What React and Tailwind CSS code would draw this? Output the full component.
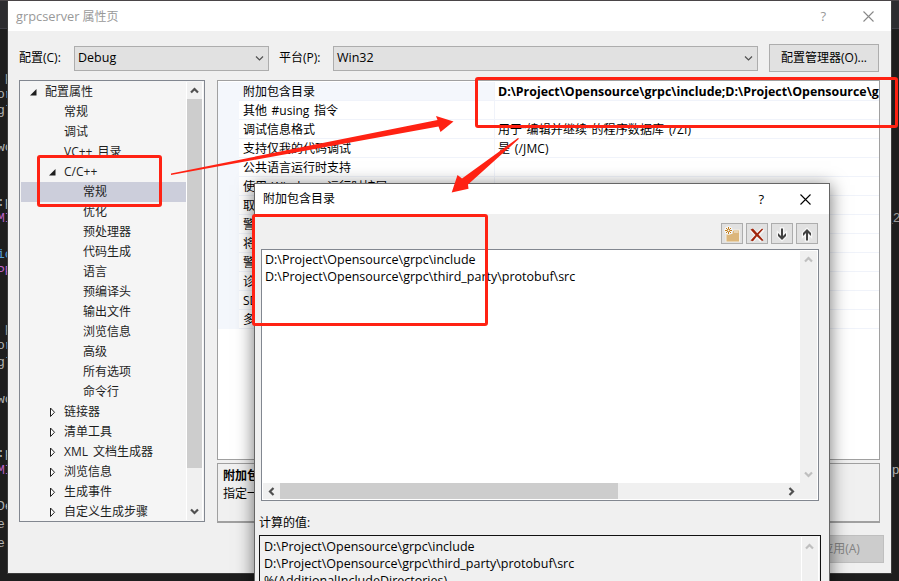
import React from 'react';

const treeItems = [
  { label: '配置属性', level: 0, arrow: 'open' },
  { label: '常规', level: 1 },
  { label: '调试', level: 1 },
  { label: 'VC++ 目录', level: 1 },
  { label: 'C/C++', level: 1, arrow: 'open' },
  { label: '常规', level: 2, selected: true },
  { label: '优化', level: 2 },
  { label: '预处理器', level: 2 },
  { label: '代码生成', level: 2 },
  { label: '语言', level: 2 },
  { label: '预编译头', level: 2 },
  { label: '输出文件', level: 2 },
  { label: '浏览信息', level: 2 },
  { label: '高级', level: 2 },
  { label: '所有选项', level: 2 },
  { label: '命令行', level: 2 },
  { label: '链接器', level: 1, arrow: 'closed' },
  { label: '清单工具', level: 1, arrow: 'closed' },
  { label: 'XML 文档生成器', level: 1, arrow: 'closed' },
  { label: '浏览信息', level: 1, arrow: 'closed' },
  { label: '生成事件', level: 1, arrow: 'closed' },
  { label: '自定义生成步骤', level: 1, arrow: 'closed' },
];

const properties = [
  { name: '附加包含目录', value: 'D:\\Project\\Opensource\\grpc\\include;D:\\Project\\Opensource\\grpc', selected: true },
  { name: '其他 #using 指令' },
  { name: '调试信息格式', value: '用于“编辑并继续”的程序数据库 (/ZI)' },
  { name: '支持仅我的代码调试', value: '是 (/JMC)' },
  { name: '公共语言运行时支持' },
  { name: '使用 Windows 运行时扩展' },
  { name: '取消显示启动版权标志' },
  { name: '警告等级' },
  { name: '将警告视为错误' },
  { name: '警告版本' },
  { name: '诊断格式' },
  { name: 'SDL 检查' },
  { name: '多处理器编译' },
];

// editor lines that stick out left and right of the window
const leftCode = [
  { top: 'top-[70px]', text: ' p', color: 'text-[#9b9b9b]' },
  { top: 'top-[87px]', text: 'or', color: 'text-[#b4b4b4]' },
  { top: 'top-[103px]', text: 'gl', color: 'text-[#b4b4b4]' },
  { top: 'top-[140px]', text: 'wo', color: 'text-[#b4b4b4]' },
  { top: 'top-[195px]', text: ':p', color: 'text-[#b4b4b4]' },
  { top: 'top-[211px]', text: 'MI', color: 'text-[#bd63c5]' },
  { top: 'top-[247px]', text: 'io', color: 'text-[#569cd6]' },
  { top: 'top-[264px]', text: 'PP', color: 'text-[#bd63c5]' },
  { top: 'top-[321px]', text: ' p', color: 'text-[#9b9b9b]' },
  { top: 'top-[338px]', text: 'or', color: 'text-[#b4b4b4]' },
  { top: 'top-[355px]', text: 'gl', color: 'text-[#b4b4b4]' },
  { top: 'top-[392px]', text: 'wo', color: 'text-[#b4b4b4]' },
  { top: 'top-[446px]', text: ':p', color: 'text-[#b4b4b4]' },
  { top: 'top-[463px]', text: 'MI', color: 'text-[#bd63c5]' },
  { top: 'top-[499px]', text: 'De', color: 'text-[#b4b4b4]' },
  { top: 'top-[517px]', text: 'e ', color: 'text-[#b4b4b4]' },
  { top: 'top-[536px]', text: 'e ', color: 'text-[#b4b4b4]' },
];

const indent = ['pl-[9px]', 'pl-[28px]', 'pl-[47px]'];

const chevrons = {
  up: 'M1 6.500 L4.5 3 L8 6.500',
  down: 'M1 2.500 L4.5 6 L8 2.500',
  left: 'M6.500 1 L3 4.5 L6.500 8',
  right: 'M2.500 1 L6 4.5 L2.500 8',
};

const Chevron = ({ dir, color = '#505050', width = 2.2 }) => (
  <svg width="9" height="9" viewBox="0 0 9 9" className="shrink-0">
    <path d={chevrons[dir]} fill="none" stroke={color} strokeWidth={width} />
  </svg>
);

const CloseIcon = ({ color }) => (
  <svg width="11" height="11" viewBox="0 0 11 11" className="shrink-0">
    <path d="M0.5 0.5 L10.5 10.5 M10.5 0.5 L0.5 10.5" stroke={color} strokeWidth="1.1" />
  </svg>
);

const TreeArrow = ({ type }) => (
  <svg width="8" height="10" viewBox="0 0 8 10" className="shrink-0">
    {type === 'open' && <path d="M6.500 2 V8.500 H0 Z" fill="#1e1e1e" />}
    {type === 'closed' && <path d="M1.5 1 V9.500 L5.5 5.250 Z" fill="#fff" stroke="#1e1e1e" />}
  </svg>
);

const Select = ({ value, className }) => (
  <div className={`flex h-[25px] items-center justify-between border border-[#adadad] bg-[#e1e1e1] pl-[3px] pr-1 ${className}`}>
    <span className="text-[12.5px]">{value}</span>
    <Chevron dir="down" width={1.2} />
  </div>
);

const ToolButton = ({ children }) => (
  <div className="flex h-[21px] w-[22px] items-center justify-center border border-[#adadad] bg-[#e1e1e1]">
    {children}
  </div>
);

const Tree = () => (
  <div className="flex h-[442px] w-[186px] shrink-0 border border-[#828790] bg-[#f5f5f5] p-px">
    <div className="h-[438px] w-[165px] overflow-hidden text-[#1e1e1e] [word-spacing:2px]">
      {treeItems.map((item, i) => (
        <div key={i} className={`flex h-5 items-center gap-[7px] ${indent[item.level]} ${item.selected ? 'bg-[#cccedb]' : ''}`}>
          <TreeArrow type={item.arrow} />
          <span className="whitespace-nowrap">{item.label}</span>
        </div>
      ))}
    </div>
    <div className="flex w-[17px] flex-col border-x border-white bg-[#f0f0f0]">
      <div className="flex h-[17px] items-center pl-[3px]"><Chevron dir="up" /></div>
      <div className="h-[369px] w-[15px] bg-[#cdcdcd]" />
      <div className="mt-auto flex h-[17px] items-center pl-[3px]"><Chevron dir="down" /></div>
    </div>
  </div>
);

const PropertyGrid = () => (
  <div className="h-[380px] border border-[#a0a0a0] bg-white pt-px text-black [word-spacing:1.5px]">
    {properties.map((p, i) => (
      <div key={i} className="flex h-[19px]">
        <div className="w-[21px] shrink-0 bg-[#f4f7fc]" />
        <div className={`flex w-[256px] shrink-0 items-center border-b border-r border-[#f0f3fa] pl-1 pt-[2px] ${p.selected ? 'bg-[#f4f7fc]' : ''}`}>
          <span className="whitespace-nowrap">{p.name}</span>
        </div>
        <div className={`flex min-w-0 grow items-center overflow-hidden border-b border-[#f0f3fa] pl-[3px] pt-[2px] ${p.selected ? 'text-[12.4px] font-bold' : 'tracking-[0.12px]'}`}>
          <span className="whitespace-nowrap">{p.value}</span>
        </div>
      </div>
    ))}
  </div>
);

const PropertyWindow = () => (
  <div className="flex h-[573px] w-[885px] flex-col border border-t-0 border-[#3c3c3c] bg-[#f0f0f0]">
    <div className="flex h-[30px] shrink-0 items-center bg-white pl-2 pr-[17px] text-[#999]">
      <span className="grow"><span className="text-[12.8px]">grpcserver</span> 属性页</span>
      <span className="mr-[37px] text-[13px]">?</span>
      <CloseIcon color="#888" />
    </div>
    <div className="mt-[13px] flex h-[28px] shrink-0 items-center pl-[11px]">
      <span className="w-[55px]">配置(C):</span>
      <Select value="Debug" className="w-[195px]" />
      <span className="ml-[10px] w-[54px]">平台(P):</span>
      <Select value="Win32" className="w-[425px]" />
      <div className="ml-[11px] flex h-[28px] w-[110px] items-center justify-center border border-[#adadad] bg-[#e1e1e1]">
        配置管理器(O)...
      </div>
    </div>
    <div className="mt-[8px] flex gap-3 pl-[11px]">
      <Tree />
      <div className="flex w-[663px] flex-col gap-[3px]">
        <PropertyGrid />
        <div className="h-[60px] border border-b-2 border-[#a0a0a0] pl-[5px] pt-[3px] leading-[18px]">
          <div className="font-bold">附加包含目录</div>
          <div>指定一个或多个要添加到包含路径中的目录</div>
        </div>
      </div>
    </div>
    <div className="mt-[12px] flex justify-end pr-[7px]">
      <div className="flex h-[28px] w-[87px] items-center justify-center border border-[#bfbfbf] bg-[#ccc] text-[#838383]">
        应用(A)
      </div>
    </div>
  </div>
);

const IncludeDialog = () => (
  <div className="absolute left-[254px] top-[183px] flex h-[420px] w-[576px] flex-col border border-[#666] bg-[#f0f0f0] shadow-[0_3px_16px_1px_rgba(0,0,0,0.5)]">
    <div className="flex h-[30px] shrink-0 items-center bg-white pl-2 pr-[18px]">
      <span className="grow">附加包含目录</span>
      <span className="mr-[36px] text-[13px]">?</span>
      <CloseIcon color="#000" />
    </div>
    <div className="mt-[9px] flex shrink-0 justify-end gap-[3px] pr-[11px]">
      <ToolButton>
        <svg width="16" height="16" viewBox="0 0 16 16" className="shrink-0">
          <path d="M1.5 7 H9 V3.500 H16 V16 H1.5 Z" fill="#f5f0e6" />
          <path d="M2.500 8 H8.5 V5.500 L9.500 4.5 H15 V15.500 H2.500 Z" fill="#dcb67a" />
          <path d="M10 6 H14.500" stroke="#f5f0e6" />
          <circle cx="4.5" cy="4.5" r="4.3" fill="#f6f6f6" />
          <path d="M4.5 1 V8 M1 4.5 H8 M2 2 L7 7 M7 2 L2 7" stroke="#c27d1a" strokeWidth="1" />
          <circle cx="4.5" cy="4.5" r="1" fill="#f6f6f6" />
        </svg>
      </ToolButton>
      <ToolButton>
        <svg width="16" height="16" viewBox="0 0 16 16" className="shrink-0">
          <path d="M2.500 3.500 L13 14.500 M14 3 L3 14.500" stroke="#f6f6f6" strokeWidth="4.5" />
          <path d="M1.500 3.500 L4 2.500 L8.200 7.200 L13 2.500 L14.200 3.300 L9.500 8.600 L14.500 14.200 L13 15 L7.900 10.200 L4 15.200 L1.500 14.500 L6.500 9 Z" fill="#a1260d" />
        </svg>
      </ToolButton>
      <ToolButton>
        <svg width="16" height="16" viewBox="0 0 16 16" className="shrink-0">
          <path d="M7 2.500 H9 V10 L12 7 V10 L8 14 L4 10 V7 L7 10 Z" fill="#424242" stroke="#f6f6f6" strokeWidth="2.500" paintOrder="stroke" />
        </svg>
      </ToolButton>
      <ToolButton>
        <svg width="16" height="16" viewBox="0 0 16 16" className="shrink-0">
          <path d="M7 14.500 H9 V7 L12 10 V7 L8 3 L4 7 V10 L7 7 Z" fill="#424242" stroke="#f6f6f6" strokeWidth="2.500" paintOrder="stroke" />
        </svg>
      </ToolButton>
    </div>
    <div className="ml-[6px] mt-[5px] flex h-[252px] w-[558px] shrink-0 flex-col border border-[#828790] bg-white p-px">
      <div className="flex h-[232px]">
        <div className="grow pl-[2px] text-[12.5px] leading-[17px]">
          <div>D:\Project\Opensource\grpc\include</div>
          <div>D:\Project\Opensource\grpc\third_party\protobuf\src</div>
        </div>
        <div className="flex w-[17px] flex-col justify-between bg-[#f0f0f0] py-1 pl-1">
          <Chevron dir="up" color="#bfbfbf" />
          <Chevron dir="down" color="#bfbfbf" />
        </div>
      </div>
      <div className="flex h-[16px] items-center bg-[#f0f0f0]">
        <div className="flex w-[17px] justify-center"><Chevron dir="left" /></div>
        <div className="h-full w-[338px] bg-[#cdcdcd]" />
        <div className="ml-auto mr-[21px]"><Chevron dir="right" /></div>
      </div>
    </div>
    <div className="ml-1 mt-[13px] h-[18px] shrink-0 leading-[18px]">计算的值:</div>
    <div className="ml-1 mt-[3px] flex h-[70px] w-[562px] shrink-0 border border-[#111] p-px">
      <div className="grow pl-[3px] pt-px text-[12.5px] leading-[17px]">
        <div>D:\Project\Opensource\grpc\include</div>
        <div>D:\Project\Opensource\grpc\third_party\protobuf\src</div>
        <div>%(AdditionalIncludeDirectories)</div>
      </div>
      <div className="flex w-[18px] border-x border-white pl-[3px] pt-[5px]">
        <Chevron dir="up" color="#bfbfbf" />
      </div>
    </div>
  </div>
);

const Annotations = () => (
  <>
    <div className="absolute left-[37px] top-[155px] h-[52px] w-[125px] rounded-[3px] border-3 border-[#ff2213]" />
    <div className="absolute left-[475px] top-[77px] h-[51px] w-[423px] rounded-[3px] border-3 border-[#ff2213]" />
    <div className="absolute left-[252px] top-[214px] h-[112px] w-[236px] rounded-[3px] border-3 border-[#ff2213]" />
    <svg className="absolute left-0 top-0" width="899" height="581" viewBox="0 0 899 581">
      <path d="M171 173.500 L437.500 120 L436 116 L453.500 121.500 L440.500 132 L438.500 126.500 L171 175 Z" fill="#ff2213" />
      <path d="M518 138 L462 178.500 L457.500 175 L451.700 192.500 L468.500 188.700 L468 184.500 L519 138.800 Z" fill="#ff2213" />
    </svg>
  </>
);

export default function App() {
  return (
    <div className="relative h-[581px] w-[899px] overflow-hidden bg-[#1e1e1e] font-['Open_Sans','Noto_Sans_CJK_SC',sans-serif] text-[12px] leading-[16px] text-black">
      <div className="h-px bg-[#4a4548]" />
      <div className="h-[28px] border-b border-[#3f3f46] bg-[#2d2d30]" />
      {leftCode.map((line, i) => (
        <span key={i} className={`absolute left-[-3px] whitespace-pre font-['Liberation_Mono',monospace] text-[13px] ${line.top} ${line.color}`}>
          {line.text}
        </span>
      ))}
      <span className="absolute left-[885px] top-[211px] font-['Liberation_Mono',monospace] text-[13px] text-[#9b9b9b]">_2</span>
      <span className="absolute left-[884px] top-[463px] font-['Liberation_Mono',monospace] text-[13px] text-[#b4b4b4]">ep</span>
      <div className="absolute left-[7px] top-px">
        <PropertyWindow />
      </div>
      <IncludeDialog />
      <Annotations />
    </div>
  );
}
